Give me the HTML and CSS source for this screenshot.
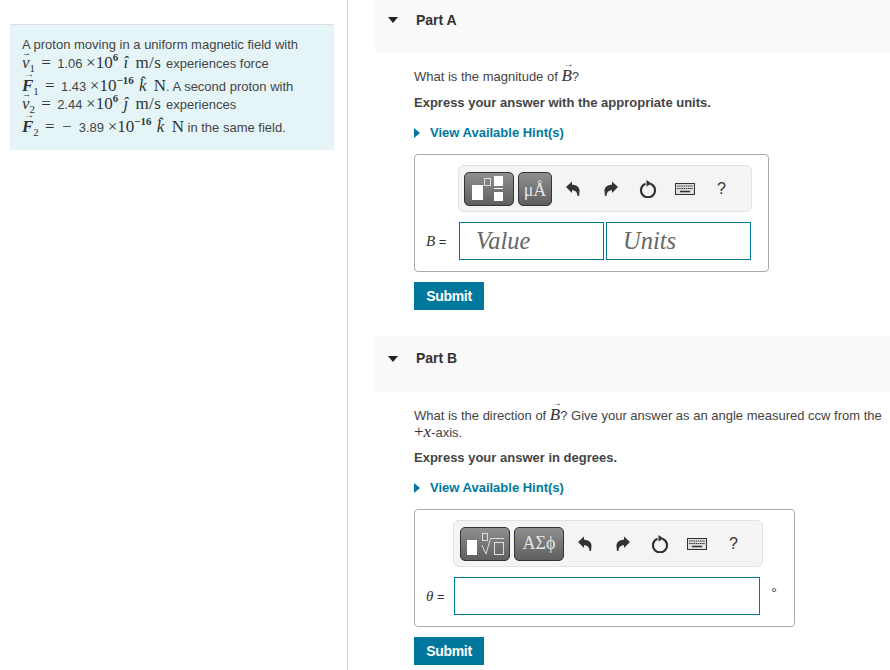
FILE: index.html
```html
<!DOCTYPE html>
<html>
<head>
    <title>Proton in a magnetic field</title>
    <link rel="stylesheet" href="styles.css">
</head>
<body>
    <div class="page">
        <div class="left">
            <div class="intro">
                <div class="line">A proton moving in a uniform magnetic field with</div>
                <div class="line"><span class="m"><span class="vec sm">v</span><sub>1</sub> <span class="eq">=</span> </span>1.06 <span class="m">×10<sup>6</sup> <i class="hat">î</i> <span class="si">m/s</span></span> experiences force</div>
                <div class="line gap"><span class="m"><span class="vec">F</span><sub>1</sub> <span class="eq">=</span> </span>1.43 <span class="m">×10<sup>−16</sup> <i class="hat">k̂</i> N</span>. A second proton with</div>
                <div class="line"><span class="m"><span class="vec sm">v</span><sub>2</sub> <span class="eq">=</span> </span>2.44 <span class="m">×10<sup>6</sup> <i class="hat">ĵ</i> <span class="si">m/s</span></span> experiences</div>
                <div class="line gap"><span class="m"><span class="vec">F</span><sub>2</sub> <span class="eq">=</span> <span class="minus">−</span> </span>3.89 <span class="m">×10<sup>−16</sup> <i class="hat">k̂</i> N</span> in the same field.</div>
            </div>
        </div>
        <div class="right">
            <div class="part-head"><span class="caret"></span>Part A</div>
            <div class="part-body">
                <p class="q">What is the magnitude of <span class="m"><span class="vec thin">B</span></span>?</p>
                <p class="bold">Express your answer with the appropriate units.</p>
                <p class="hint"><span class="tri"></span>View Available Hint(s)</p>
                <div class="answer answer-a">
                    <div class="toolbar">
                        <button class="tpl tpl-a">
                            <svg width="48" height="32" viewBox="0 0 48 32"><rect x="7" y="12" width="11" height="15" fill="#fff"/><rect x="19.5" y="5.5" width="6" height="7" fill="none" stroke="#ddd"/><rect x="29" y="3" width="9" height="10" fill="#fff"/><rect x="29" y="15" width="9" height="1" fill="#fff"/><rect x="29" y="19" width="9" height="9" fill="#fff"/></svg>
                        </button>
                        <button class="tpl tpl-units">μÅ</button>
                        <div class="tools">
                            <svg class="ic" width="16" height="16" viewBox="0 0 16 16"><path d="M1 6 7 .5V3.800C11.500 3.800 15 6.500 14.500 10.500L14 15H12.500C12.500 11.500 10.500 9.200 7 9.200V12Z" fill="#333"/></svg>
                            <svg class="ic" width="16" height="16" viewBox="0 0 16 16"><path d="M15 6 9 .5V3.800C4.500 3.800 1 6.500 1.500 10.500L2 15H3.500C3.500 11.500 5.500 9.200 9 9.200V12Z" fill="#333"/></svg>
                            <svg class="ic" width="18" height="18" viewBox="0 0 18 18"><path d="M6.500 3.800A7 7 0 1 0 11.500 3.800" fill="none" stroke="#333" stroke-width="2.200"/><path d="M7.500 0 12.500 3.500 7.500 6.500Z" fill="#333"/></svg>
                            <svg class="ic" width="20" height="12" viewBox="0 0 20 12"><rect x=".5" y=".5" width="19" height="11" fill="#ddd" stroke="#333"/><path d="M2 3H18M2 5.500H18" stroke="#333" stroke-dasharray="1.500 .7"/><path d="M5 8.500H15" stroke="#333" stroke-width="1.500"/></svg>
                            <span class="help">?</span>
                        </div>
                    </div>
                    <div class="fields">
                        <span class="var"><i>B</i> =</span>
                        <input class="field" placeholder="Value">
                        <input class="field" placeholder="Units">
                    </div>
                </div>
                <button class="submit">Submit</button>
            </div>

            <div class="part-head part-b"><span class="caret"></span>Part B</div>
            <div class="part-body">
                <p class="q q-b">What is the direction of <span class="m"><span class="vec thin">B</span></span>? Give your answer as an angle measured ccw from the <span class="m">+<i>x</i></span>-axis.</p>
                <p class="bold">Express your answer in degrees.</p>
                <p class="hint"><span class="tri"></span>View Available Hint(s)</p>
                <div class="answer answer-b">
                    <div class="toolbar">
                        <button class="tpl tpl-b">
                            <svg width="48" height="32" viewBox="0 0 48 32"><rect x="6" y="12" width="10" height="15" fill="#fff"/><rect x="21.500" y="5.500" width="5" height="7" fill="none" stroke="#ddd"/><path d="M21 17 25 26 29.500 10.500H43" fill="none" stroke="#ddd"/><rect x="33.500" y="14.500" width="9" height="12" fill="none" stroke="#ddd"/></svg>
                        </button>
                        <button class="tpl tpl-sym">ΑΣϕ</button>
                        <div class="tools">
                            <svg class="ic" width="16" height="16" viewBox="0 0 16 16"><path d="M1 6 7 .5V3.800C11.500 3.800 15 6.500 14.500 10.500L14 15H12.500C12.500 11.500 10.500 9.200 7 9.200V12Z" fill="#333"/></svg>
                            <svg class="ic" width="16" height="16" viewBox="0 0 16 16"><path d="M15 6 9 .5V3.800C4.500 3.800 1 6.500 1.500 10.500L2 15H3.500C3.500 11.500 5.500 9.200 9 9.200V12Z" fill="#333"/></svg>
                            <svg class="ic" width="18" height="18" viewBox="0 0 18 18"><path d="M6.500 3.800A7 7 0 1 0 11.500 3.800" fill="none" stroke="#333" stroke-width="2.200"/><path d="M7.500 0 12.500 3.500 7.500 6.500Z" fill="#333"/></svg>
                            <svg class="ic" width="20" height="12" viewBox="0 0 20 12"><rect x=".5" y=".5" width="19" height="11" fill="#ddd" stroke="#333"/><path d="M2 3H18M2 5.500H18" stroke="#333" stroke-dasharray="1.500 .7"/><path d="M5 8.500H15" stroke="#333" stroke-width="1.500"/></svg>
                            <span class="help">?</span>
                        </div>
                    </div>
                    <div class="fields">
                        <span class="var"><i>θ</i> =</span>
                        <input class="field field-wide">
                        <span class="unit">°</span>
                    </div>
                </div>
                <button class="submit">Submit</button>
            </div>
        </div>
    </div>
</body>
</html>
```

FILE: styles.css
```css
html, body { margin: 0; padding: 0; }
body { font-family: "Liberation Sans", Arial, sans-serif; font-size: 13px; color: #444; background: #fff; overflow: hidden; }
.page { display: flex; width: 890px; height: 670px; overflow: hidden; }

.left { box-sizing: border-box; flex: none; border-right: 1px solid #ccc; width: 348px; padding: 24px 13px 0 10px; }
.intro { background: #e5f5f7; border-top: 1px solid #ddd; padding: 11px 0 14px 12px; height: 126px; box-sizing: border-box; }
.line { height: 18px; line-height: 18px; white-space: nowrap; }
.line + .line { height: 17px; padding-top: 1px; }
.line.gap { margin-top: 5px; }

.m { font-family: "Liberation Serif", serif; font-size: 17px; line-height: 0; color: #333; }
.m sub, .m sup { font-size: 11px; line-height: 0; }
.m sup { font-weight: bold; }
.eq { margin: 0 2px; }
.minus { margin: 0 3px 0 1px; }
.hat { margin: 0 3px 0 1px; }
.si { letter-spacing: 0.5px; margin-right: 1px; }
.vec { position: relative; font-style: italic; font-weight: bold; }
.vec::before { content: "→"; position: absolute; left: 2px; top: -7px; font-size: 10px; font-style: normal; font-weight: normal; line-height: 1; }
.vec.sm, .vec.thin { font-weight: normal; }
.vec.sm::before { top: -4px; left: 0; font-size: 9px; }

.right { flex: 1; padding-left: 27px; min-width: 0; }
.part-head { height: 53px; background: #f9f9f9; font-size: 14px; font-weight: bold; color: #333; line-height: 40px; padding-left: 13px; display: flex; align-items: flex-start; }
.part-b { height: 56px; line-height: 44px; margin-top: 26px; }
.caret { width: 0; height: 0; border-left: 5.5px solid transparent; border-right: 5.5px solid transparent; border-top: 6px solid #222; margin: 17px 18px 0 0; }
.part-b .caret { margin-top: 20px; }
.part-body { padding-left: 39px; }
.q { margin: 14px 0 0; line-height: 20px; }
.q-b { margin-top: 15px; line-height: 17px; }
.bold { margin: 6px 0 0; font-weight: bold; line-height: 20px; }
.q-b + .bold { margin-top: 7px; }
.hint { margin: 10px 0 0; color: #00789d; font-weight: bold; line-height: 20px; display: flex; align-items: center; }
.tri { width: 0; height: 0; border-top: 5px solid transparent; border-bottom: 5px solid transparent; border-left: 6px solid #00789d; margin-right: 10px; }

.answer { border: 1px solid #aaa; border-radius: 4px; box-sizing: border-box; height: 118px; margin-top: 11px; }
.answer-a { width: 355px; padding: 10px 16px 0 43px; }
.answer-b { width: 381px; padding: 10px 31px 0 38px; }
.toolbar { display: flex; align-items: center; gap: 4px; height: 47px; box-sizing: border-box; background: #f4f4f4; border: 1px solid #e2e2e2; border-radius: 6px; padding: 0 5px; }
.answer-b .toolbar { padding-left: 6px; }
.tpl { height: 34px; padding: 0; border: 1px solid #333; border-radius: 5px; background: linear-gradient(#8f8f92, #5f5f5f); color: #e4e4e4; font-family: "Liberation Serif", serif; font-size: 18px; display: flex; align-items: center; justify-content: center; }
.tpl-units { padding-top: 3px; }
.tpl-a, .tpl-b { width: 50px; }
.tpl-units { width: 34px; }
.tpl-sym { width: 50px; }
.tools { display: flex; align-items: center; margin-left: 9px; }
.ic { flex: none; }
.ic:nth-child(1) { margin-right: 22px; }
.ic:nth-child(2) { margin-right: 20px; }
.ic:nth-child(3) { margin-right: 18px; }
.ic:nth-child(4) { margin-right: 22px; }
.help { font-size: 16px; color: #333; }

.fields { display: flex; align-items: center; margin-top: 10px; height: 38px; }
.answer-a .fields { margin-left: -32px; }
.answer-b .fields { margin-left: -27px; margin-right: -27px; }
.var { color: #333; width: 33px; flex: none; white-space: nowrap; }
.var i { font-family: "Liberation Serif", serif; font-size: 15px; }
.answer-b .var { width: 28px; }
.field { box-sizing: border-box; width: 145px; height: 38px; margin: 0 2px 0 0; border: 1px solid #00789d; border-radius: 0; padding: 0 0 0 16px; font-family: "Liberation Serif", serif; font-style: italic; font-size: 24.5px; background: #fff; outline: none; }
.field::placeholder { color: #666; opacity: 1; }
.field-wide { width: 306px; margin: 0; }
.unit { margin: 0 0 7px 11px; font-size: 15px; color: #444; }

.submit { display: block; margin-top: 10px; width: 70px; height: 28px; padding: 0; background: #00789d; color: #fff; border: none; font-family: "Liberation Sans", Arial, sans-serif; font-size: 14px; font-weight: bold; letter-spacing: -0.3px; }
```
